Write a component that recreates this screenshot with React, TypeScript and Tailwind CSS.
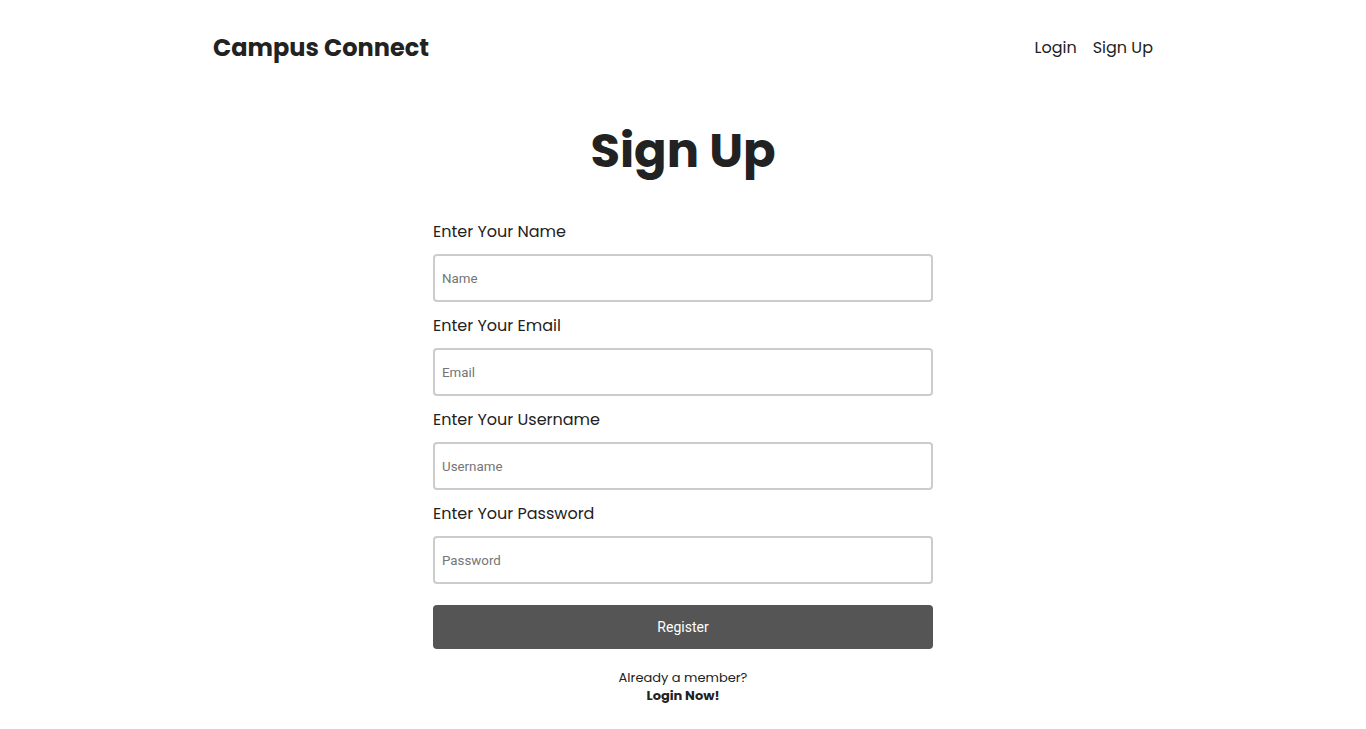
import React from "react";

const poppins = "font-['Poppins','Noto_Sans',sans-serif]";
const roboto = "font-['Roboto','Liberation_Sans',sans-serif]";

function Field({ label, placeholder, type }: { label: string; placeholder: string; type: string }) {
  return (
    <div className="flex flex-col">
      <label className={`${poppins} text-base leading-6 text-[#222]`}>{label}</label>
      <input
        type={type}
        placeholder={placeholder}
        className={`${roboto} mt-[10px] mb-3 h-12 w-full rounded-[4px] border-2 border-[#ccc] px-[7px] text-[13.333px] text-[#222] placeholder:text-[#757575] focus:outline-none`}
      />
    </div>
  );
}

function App() {
  return (
    <div className="min-h-screen bg-white">
      {/* Header */}
      <header className="mx-auto flex h-24 w-[940px] items-center justify-between">
        <h1 className={`${poppins} text-2xl font-bold text-[#222]`}>Campus Connect</h1>
        <nav className={`${poppins} flex gap-4 text-base text-[#222]`}>
          <a href="#">Login</a>
          <a href="#">Sign Up</a>
        </nav>
      </header>

      {/* Sign Up form */}
      <main className="mx-auto flex w-[500px] flex-col">
        <h2 className={`${poppins} mt-[26px] mb-10 text-center text-5xl leading-[58px] font-bold text-[#222]`}>
          Sign Up
        </h2>
        <form className="flex flex-col" onSubmit={(e) => e.preventDefault()}>
          <Field label="Enter Your Name" placeholder="Name" type="text" />
          <Field label="Enter Your Email" placeholder="Email" type="email" />
          <Field label="Enter Your Username" placeholder="Username" type="text" />
          <Field label="Enter Your Password" placeholder="Password" type="password" />
          <button
            type="submit"
            className={`${roboto} mt-[9px] h-11 w-full rounded-[4px] bg-[#555] text-sm text-white`}
          >
            Register
          </button>
        </form>
        <div className={`${poppins} mt-5 flex flex-col items-center text-[13px] leading-[18px] text-[#222]`}>
          <p>Already a member?</p>
          <a href="#" className="font-bold">Login Now!</a>
        </div>
      </main>
    </div>
  );
}

export default App;
